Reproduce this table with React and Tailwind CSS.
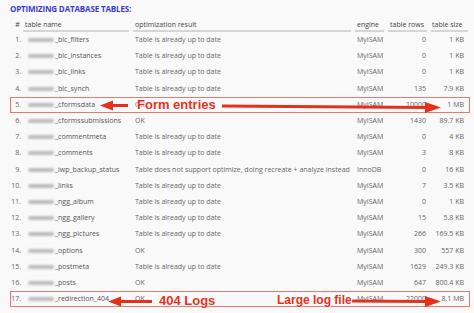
import React from "react";

const rows = [
  ["1.", "_blc_filters", "Table is already up to date", "MyISAM", "0", "1 KB"],
  ["2.", "_blc_instances", "Table is already up to date", "MyISAM", "0", "1 KB"],
  ["3.", "_blc_links", "Table is already up to date", "MyISAM", "0", "1 KB"],
  ["4.", "_blc_synch", "Table is already up to date", "MyISAM", "135", "7.9 KB"],
  ["5.", "_cformsdata", "OK", "MyISAM", "10000", "1 MB", true],
  ["6.", "_cformssubmissions", "OK", "MyISAM", "1430", "89.7 KB"],
  ["7.", "_commentmeta", "Table is already up to date", "MyISAM", "0", "4 KB"],
  ["8.", "_comments", "Table is already up to date", "MyISAM", "3", "8 KB"],
  ["9.", "_iwp_backup_status", "Table does not support optimize, doing recreate + analyze instead", "InnoDB", "0", "16 KB"],
  ["10.", "_links", "Table is already up to date", "MyISAM", "7", "3.5 KB"],
  ["11.", "_ngg_album", "Table is already up to date", "MyISAM", "0", "1 KB"],
  ["12.", "_ngg_gallery", "Table is already up to date", "MyISAM", "15", "5.8 KB"],
  ["13.", "_ngg_pictures", "Table is already up to date", "MyISAM", "266", "169.5 KB"],
  ["14.", "_options", "OK", "MyISAM", "300", "557 KB"],
  ["15.", "_postmeta", "Table is already up to date", "MyISAM", "1629", "249.3 KB"],
  ["16.", "_posts", "OK", "MyISAM", "647", "800.4 KB"],
  ["17.", "_redirection_404", "OK", "MyISAM", "22000", "8.1 MB", true],
];

const grid = "grid grid-cols-[13px_110px_222px_33px_43px_39px]";

function Arrow({ x1, y1, x2, y2, head = 15, w = 11, stroke = 3 }) {
  const dx = x2 - x1;
  const dy = y2 - y1;
  const len = Math.hypot(dx, dy);
  const ux = dx / len;
  const uy = dy / len;
  const bx = x2 - ux * head;
  const by = y2 - uy * head;
  const px = -uy * (w / 2);
  const py = ux * (w / 2);
  return (
    <g>
      <line x1={x1} y1={y1} x2={bx + ux * 1} y2={by + uy * 1} stroke="#e5311c" strokeWidth={stroke} />
      <polygon points={`${x2},${y2} ${bx + px},${by + py} ${bx - px},${by - py}`} fill="#e5311c" />
    </g>
  );
}

export default function App() {
  return (
    <div className="relative w-[474px] h-[313px] overflow-hidden bg-[#f9f9f9] font-['Open_Sans',sans-serif] text-[7px] text-[#666]">
      <div className="pl-[10px] pt-[4px] h-[19px] leading-[10px] text-[8px] font-bold text-[#3a3ad2] tracking-[-0.15px]">
        OPTIMIZING DATABASE TABLES:
      </div>
      <div className="mx-[10px] w-[460px]">
        <div className={`${grid} h-[13px] text-[#444] leading-[11px]`}>
          <div className="text-center pl-[2px]">#</div>
          <div className="mr-[4px] pl-[2px] border-b-2 border-[#d6d6d6]">table name</div>
          <div className="mr-[4px] pl-[2px] border-b-2 border-[#d6d6d6]">optimization result</div>
          <div className="mr-[4px] pl-[2px] border-b-2 border-[#d6d6d6]">engine</div>
          <div className="mr-[4px] pl-[2px] border-b-2 border-[#d6d6d6]">table rows</div>
          <div className="mr-[2px] pl-[1px] border-b-2 border-[#d6d6d6]">table size</div>
        </div>
        {rows.map((r) => (
          <div
            key={r[0]}
            className={`${grid} h-[16.2px] items-center leading-[10px] ${
              r[6] ? "outline outline-1 outline-[#e57a70] -outline-offset-1" : ""
            }`}
          >
            <div className="text-right pr-[2px] whitespace-nowrap">{r[0]}</div>
            <div className="flex items-center pl-[5px] whitespace-nowrap">
              <span className="inline-block w-[26px] h-[4px] bg-[#bdbdbd] blur-[1.3px] rounded-full mr-[1px]" />
              <span className="text-[#555]">{r[1]}</span>
            </div>
            <div className="pl-[2px] whitespace-nowrap">{r[2]}</div>
            <div className="pl-[2px] whitespace-nowrap">{r[3]}</div>
            <div className="text-right pr-[5px] whitespace-nowrap">{r[4]}</div>
            <div className="text-right pr-[6px] whitespace-nowrap">{r[5]}</div>
          </div>
        ))}
      </div>

      <svg className="absolute left-0 top-0" width="474" height="313" viewBox="0 0 474 313">
        <Arrow x1={128} y1={105.5} x2={100} y2={105.5} head={13} w={10} />
        <Arrow x1={222} y1={106} x2={441} y2={107.5} head={16} w={11} />
        <Arrow x1={152} y1={301.5} x2={108} y2={301.5} head={13} w={10} />
        <Arrow x1={352} y1={301} x2={441} y2={301.5} head={16} w={11} />
      </svg>

      <div className="absolute left-[137px] top-[98px] leading-[14px] text-[13px] font-bold text-[#e5311c] font-['Liberation_Sans',Arial,sans-serif] [text-shadow:0_0_2px_#fff,0_0_2px_#fff]">
        Form entries
      </div>
      <div className="absolute left-[159px] top-[294px] leading-[14px] text-[13px] font-bold text-[#e5311c] font-['Liberation_Sans',Arial,sans-serif] [text-shadow:0_0_2px_#fff,0_0_2px_#fff]">
        404 Logs
      </div>
      <div className="absolute left-[277px] top-[293px] leading-[14px] text-[12px] font-bold text-[#e5311c] font-['Liberation_Sans',Arial,sans-serif] [text-shadow:0_0_2px_#fff,0_0_2px_#fff]">
        Large log file
      </div>
    </div>
  );
}
